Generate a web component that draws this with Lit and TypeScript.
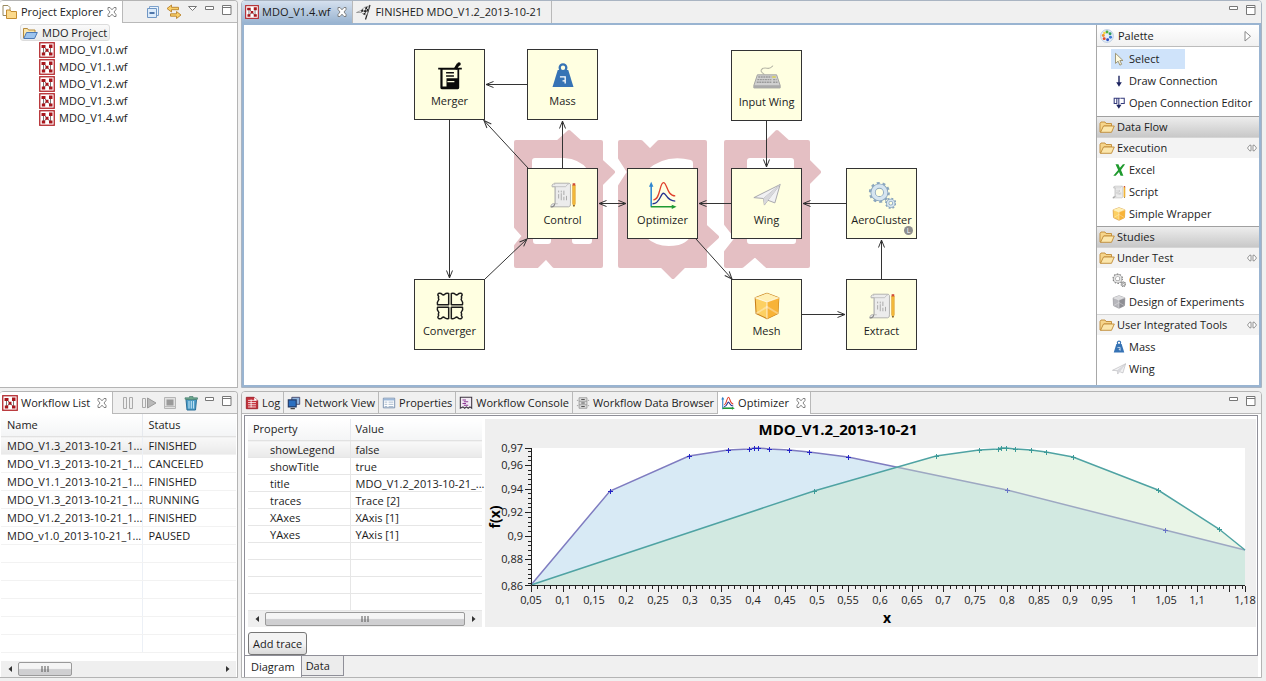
import { LitElement, html, svg, css, nothing } from "lit";
import { customElement, state } from "lit/decorators.js";
import { classMap } from "lit/directives/class-map.js";

/* ---------- icons ---------- */

const wf = svg`<rect x=".75" y=".75" width="14.5" height="14.5" fill="#fff" stroke="#b3262b" stroke-width="1.3"/>
  <path d="M4.5 4.5V12M4.5 12L8 8M8 8L11.500 12M11.500 12V4.500M4.500 4.500L8 8" fill="none" stroke="#555" stroke-width=".8"/>
  <path d="M2.500 3h4v3h-4zM10 2.500h3.500V6H10zM6.500 6.800h3v3h-3zM2.800 10.500h3.400v3H2.800zM10 10.500h3.500v3H10z" fill="#a8161c"/>`;
const folder = svg`<path d="M1 4.500L2 3h4l1 1.500h5.500V7H5L2.500 13H1z" fill="#f6d58b" stroke="#c08a35" stroke-width=".9"/>
  <path d="M1.500 13.300L4.500 7H15.300L12.500 13.300z" fill="#fbe6ac" stroke="#c08a35" stroke-width=".9"/>`;
const chart = svg`<path d="M2 15V2.500M14 14H2" fill="none" stroke="#2f7fc4" stroke-width="1.3"/><path d="M2 14h11" stroke="#1f9a32" stroke-width="1.500"/>
  <path d="M0.300 4L2 .800L3.700 4z" fill="#2f7fc4"/><path d="M12.500 12.300L15.700 14L12.500 15.700z" fill="#1f9a32"/>
  <path d="M3.500 10C6.500 10 6.500 1.500 8.500 1.500S10 9 14 9" fill="none" stroke="#e0402c" stroke-width="1.200"/>
  <path d="M3.500 12.200C7 12.200 7 7 8.500 7S10 11.500 14 11.500" fill="none" stroke="#26338f" stroke-width="1.200"/>`;
const plot = svg`<path d="M2.500 29V5" stroke="#2f86d0" stroke-width="1.800"/><path d="M0 6.500L2.500 .800L5 6.500z" fill="#2f86d0"/>
  <path d="M2 29.500H27" stroke="#1f9a32" stroke-width="1.600"/><path d="M26 27L31.500 29.500L26 32z" fill="#1f9a32"/>
  <path d="M5 21.500C13 21.500 12 1.800 16.500 1.800S20 17 30 17" fill="none" stroke="#e0402c" stroke-width="1.500"/>
  <path d="M4 26C13 26 13 14 16.500 14S20 23 30 23" fill="none" stroke="#26338f" stroke-width="1.500"/>`;
const scroll = svg`<path d="M7 3.500Q3 2.500 3.500 6.500H7V26Q2.500 25 2 29.500H22.500Q25 29 24.500 26V4Q24 2.500 22 2.500H6" fill="#ececec" stroke="#a9a9a9" stroke-width="1"/>
  <path d="M7 6.500V26H10" fill="none" stroke="#bbb"/><path d="M2 29.500Q6 30 6.500 26" fill="none" stroke="#888" stroke-width="1.500"/><path d="M3.500 6.500H19Q21 3 24 2.500" fill="none" stroke="#bdbdbd"/>
  <path d="M11 11v2M11 15v5M14 11v2M14 14v8M17 11v5M17 18v4M20 17v5" stroke="#a2a2a2" stroke-width="1"/>
  <path d="M27 4.500h3V26l-1.500 3.500L27 26z" fill="#f5bd3d" stroke="#d58a1a" stroke-width=".6"/><path d="M27 2.500h3v2.500h-3z" fill="#cf4a3a"/><path d="M27.700 27.500h1.600l-.8 2z" fill="#333"/>`;
const weight = svg`<circle cx="16" cy="6.500" r="3.800" fill="none" stroke="#3673b5" stroke-width="2.600"/><path d="M10 9H22L28 28.500H4z" fill="#3673b5"/>
  <path d="M12.500 17H18.500V24.500M15.500 21.500H18.500" fill="none" stroke="#fff" stroke-width="1.500"/>`;
const plane = svg`<path d="M1 19L31 4L25 25L17 22L13 27.500L12 20z" fill="#f1f1f3" stroke="#a5a5aa" stroke-width="1.100" stroke-linejoin="round"/>
  <path d="M12 20L31 4L17 22z" fill="#fff" stroke="#b5b5ba" stroke-width="1" stroke-linejoin="round"/><path d="M12 20L13 27.500L17 22L31 4z" fill="#d8d8dc"/>`;
const cube = (a: string, b: string, c: string, s: string) => svg`<path d="M16 1.500L29.500 6.500L28.500 24.500L16 30.500L3.500 24.500L2.500 6.500z" fill="${b}" stroke="${s}" stroke-width="1.200" stroke-linejoin="round"/>
  <path d="M16 1.500L29.500 6.500L16 11.500L2.500 6.500z" fill="${a}"/><path d="M16 11.500L29.500 6.500L28.500 24.500L16 30.500z" fill="${c}"/>
  <path d="M2.500 6.500L16 11.500L29.500 6.500M16 11.500V30.500" fill="none" stroke="#fff" stroke-opacity=".7" stroke-width="1.200"/>
  <path d="M3.500 24.500L16 17L28.500 24.500" fill="none" stroke="#fff" stroke-opacity=".35" stroke-width="2"/>`;
const gears = (c: string, f: string) => svg`<circle cx="13" cy="13" r="10.500" fill="none" stroke="${c}" stroke-width="3" stroke-dasharray="3.300 3.300"/>
  <circle cx="13" cy="13" r="7.200" fill="none" stroke="${c}" stroke-width="6"/><circle cx="13" cy="13" r="7.200" fill="none" stroke="${f}" stroke-width="4"/>
  <circle cx="26" cy="25.500" r="5.300" fill="none" stroke="${c}" stroke-width="2.400" stroke-dasharray="2.080 2.080"/><circle cx="26" cy="25.500" r="3.500" fill="none" stroke="${c}" stroke-width="3.600"/><circle cx="26" cy="25.500" r="3.500" fill="none" stroke="${f}" stroke-width="1.800"/>`;
const piece = "M3 5Q1 2.500 3.500 1.500Q5.500 1 7 2.700Q8.500 4 10 2.500Q11.500 1 14.500 1.700V14.500H1.700Q1 11.500 2.500 10Q4 8.500 2.700 7z";

const icons: Record<string, [number, unknown]> = {
  wf: [16, wf],
  folder: [16, folder],
  chart: [16, chart],
  plot: [32, plot],
  scroll: [32, scroll],
  weight: [32, weight],
  plane: [32, plane],
  box: [32, cube("#fff0b5", "#fdd062", "#f8b338", "#c87f1a")],
  greybox: [32, cube("#dcdcde", "#b6b6bb", "#8e8e94", "#85858a")],
  gears: [32, gears("#8ba6bd", "#d6e5f0")],
  greygears: [32, gears("#7b7b7b", "#e4e4e4")],
  files: [16, svg`<path d="M1 1.500h5l2 2v8H1z" fill="#fff" stroke="#9a8a60"/><path d="M4.500 6h3.500l1 1.500h5.500v7h-10z" fill="#fbd98b" stroke="#c48c30"/>`],
  project: [16, svg`<path d="M1.500 13V3.500h4l1 1.500H13v3" fill="#fbe6ac" stroke="#b58b3d"/><path d="M1.800 13.500L4.500 7.500H15.300L12.500 13.500z" fill="#9cc3ee" stroke="#4c78b4"/>`],
  close: [12, svg`<path d="M2 1.500h2L6 3.800L8 1.500h2V3.500L8 6L10 8.500v2H8L6 8.200L4 10.500H2V8.500L4 6L2 3.500z" fill="#fff" stroke="#777" stroke-width=".9"/>`],
  collapse: [16, svg`<path d="M4.500 4.500v-2h9v9h-2" fill="#eaf3fc" stroke="#7fa3cc"/><path d="M2.500 4.500h9v9h-9z" fill="#dcebfa" stroke="#6f96c4"/><path d="M4.500 9h5" stroke="#1f4f8f" stroke-width="1.500"/>`],
  link: [16, svg`<path d="M1 4.500L5.500 1V3.300H12.500V5.700H5.500V8z" fill="#f9cf67" stroke="#b9812a" stroke-width=".9"/><path d="M15 11L10.500 7.500V9.800H4.500V12.200H10.500V14.500z" fill="#f9cf67" stroke="#b9812a" stroke-width=".9"/>`],
  menu: [12, svg`<path d="M1.500 2.500h8L5.500 6.500z" fill="#fff" stroke="#777"/>`],
  min: [12, svg`<path d="M1.500 2.500h8v3h-8z" fill="#fff" stroke="#777"/>`],
  max: [12, svg`<path d="M1.500 1.500h8.500v9H1.500zM1.500 3.500h8.500" fill="#fff" stroke="#777"/>`],
  flag: [16, svg`<path d="M14 1L9.500 15.500" stroke="#222" stroke-width="1.200"/><path d="M.5 8.500L5 6.500L8 3.500L13 2L11 11L7.500 10.500L5.500 8.500z" fill="#eee" stroke="#777" stroke-width=".6"/><path d="M5 6.500l2-1.500l.5 2.200l-2 1zM9.500 3.200l2-.6l-.5 2.500l-2 .3zM7.500 7.200l1.800-1.800l1.200 1.800l-1 1.800zM11 5l1.300 0l-.6 2.500l-1.400-.2zM7.500 9l2 0l-.4 1.700l-1.600-.2z" fill="#222"/>`],
  pause: [16, svg`<path d="M3.500 2.500h3v11h-3zM9.500 2.500h3v11h-3z" fill="#eee" stroke="#aaa"/>`],
  resume: [16, svg`<path d="M1.500 3.500h3v9h-3z" fill="#eee" stroke="#aaa"/><path d="M6.500 3L15 8L6.500 13z" fill="#b9b9b9" stroke="#999"/>`],
  stop: [16, svg`<path d="M2.500 2.500h11v11h-11z" fill="#e2e2e2" stroke="#b5b5b5"/><path d="M4.500 4.500h7v6h-7z" fill="#9a9a9a"/><path d="M2.500 11.500h11" stroke="#bbb"/>`],
  trash: [16, svg`<path d="M3 4.500h10.500L12.500 15h-8.500z" fill="#4b9cc8" stroke="#2d6f97"/><path d="M6 6v7.500M8.300 6v7.500M10.600 6v7.500" stroke="#c9e6f5"/><path d="M2 4.200Q8 5.500 14.500 4.200V2.800H10V1.500H6.500V2.800H2z" fill="#6da88c" stroke="#4b7f74" stroke-width=".7"/>`],
  palette: [16, svg`<circle cx="8" cy="8" r="7.300" fill="#e6eef8" stroke="#b5c8e0"/><circle cx="8" cy="3.500" r="1.700" fill="#4caf3f"/><circle cx="11.500" cy="5.500" r="1.700" fill="#2f9c64"/><circle cx="12" cy="9.500" r="1.700" fill="#3c78d8"/><circle cx="8.700" cy="12.300" r="1.700" fill="#2c4fc0"/><circle cx="4.800" cy="11" r="1.700" fill="#e24a2c"/><circle cx="3.800" cy="7.300" r="1.700" fill="#f2902b"/><circle cx="5" cy="4.500" r="1.400" fill="#f7d33b"/>`],
  expand: [12, svg`<path d="M3 1.500L8.500 6.300L3 11z" fill="#fff" stroke="#888"/>`],
  pin: [12, svg`<path d="M5 3.200H3.700L1.500 6L3.700 8.800H5V3.200zM7 3.200H8.300L10.500 6L8.300 8.800H7z" fill="#fff" stroke="#888" stroke-width=".9"/>`],
  cursor: [16, svg`<path d="M4 1.500V13L7 10.500L9 15L11 14L9 9.700H12.500z" fill="#fffbe0" stroke="#8b7f5a" stroke-width=".9"/>`],
  arrow: [16, svg`<path d="M8 2V11" stroke="#1d2460" stroke-width="1.600"/><path d="M4.800 9.500h6.400L8 14.500z" fill="#1d2460"/>`],
  editor: [16, svg`<path d="M2.500 2.500h3v6h-3zM9.500 2.500h4.500v6h-4M6 2.500h3M7.800 3v8" fill="none" stroke="#343a7c" stroke-width="1.200"/><path d="M4.800 10h6L7.800 14.500z" fill="#1d2460"/>`],
  excel: [16, svg`<path d="M4 1.500h3.300L9 5.500L12.500 1.500H15L10.300 8L13 14.500H9.800L8 10.300L4.200 14.500H1.500L7 8z" fill="#1f9a2e"/>`],
  log: [16, svg`<path d="M1.500 1.500h9l4 3.500v9.500h-13z" fill="#c4303a" stroke="#9a1c26"/><path d="M3.500 5h9M3.500 7.500h9M3.500 10h9M3.500 12.500h9M7 4v9" stroke="#fff" stroke-width=".9"/><path d="M10.500 1.500v3.500h4" fill="#fff"/>`],
  network: [16, svg`<path d="M5.500 1.500h9v8h-9z" fill="#8fb4de" stroke="#446"/><path d="M1.500 4.500h9v8h-9z" fill="#2a6fc0" stroke="#223a66" stroke-width="1.300"/><path d="M4 14.500h5" stroke="#444" stroke-width="1.500"/>`],
  properties: [16, svg`<path d="M1.500 2.500h13v11h-13z" fill="#fff" stroke="#6d87a8"/><path d="M2 3h12v2H2z" fill="#9db9da"/><path d="M3 7h3M3 9.500h3M3 12h3M7.500 7H13M7.500 9.500H13M7.500 12H13" stroke="#9fb2c8"/>`],
  console: [16, svg`<path d="M1.500 1.500h13v12.500l-2-1.500l-2 1.500l-2-1.500l-2 1.500l-2-1.500l-3 1.500z" fill="#f2eaf4" stroke="#3c3440" stroke-width="1.200"/><path d="M4 4.500h4M5.500 6.500h5M4 8.500h4M5.500 10.500h5" stroke="#8e3a96" stroke-width="1.200"/>`],
  database: [16, svg`<path d="M3.500 2h9v12h-9z" fill="#dcdcdc" stroke="#9a9a9a"/><path d="M3.500 6h9M3.500 10h9" stroke="#9a9a9a"/><path d="M6 4h4M6 8h4M6 12h4" stroke="#555" stroke-width="1.400"/><path d="M1 5h1.500M13.500 5h1.500M1 11h1.500M13.500 11h1.500" stroke="#999"/>`],
  beaker: [32, svg`<path d="M2.500 6.500h27v2h-3V29.500q0 1.500-1.500 1.500h-18.500q-1.500 0-1.500-1.500V8.500h-2.500z" fill="#0a0a0a"/><path d="M7.500 8.800h17V18.500H12v9.500H7.500z" fill="#ffffe1"/><path d="M11.500 12.300h9M11.500 16h9" stroke="#111" stroke-width="1.700"/><path d="M13 22.500h8" stroke="#ffffe1" stroke-width="1.500"/><path d="M22 8L25.500 2.500" stroke="#0a0a0a" stroke-width="3.500"/><circle cx="26.300" cy="2.300" r="2" fill="#0a0a0a"/>`],
  converge: [32, svg`<g fill="none" stroke="#1c1c1c" stroke-width="1.700" stroke-linejoin="round"><path d="${piece}"/><path d="${piece}" transform="matrix(-1 0 0 1 32 0)"/><path d="${piece}" transform="matrix(1 0 0 -1 0 32)"/><path d="${piece}" transform="matrix(-1 0 0 -1 32 32)"/></g>`],
  keyboard: [32, svg`<path d="M13 13C6 9 10 5 16 6S21 3 23 3.500" fill="none" stroke="#b5b5a5" stroke-width="1.200"/><path d="M5 13.500H27L31 25.500V28.500H1V25.500z" fill="#d0d0d0" stroke="#9b9b9b"/><path d="M1 25.500H31V28.500H1z" fill="#aaa"/><path d="M6 16h15M5 19h16M4.300 22h17M23 19h4M23 22h5" stroke="#9a9a9a" stroke-width="1.600" stroke-dasharray="2.200 .7"/><path d="M22 16h4" stroke="#d8cf4a" stroke-width="1.600"/>`],
  left: [8, svg`<path d="M6 1V7L2.500 4z" fill="#333"/>`],
  right: [8, svg`<path d="M2 1V7L5.500 4z" fill="#333"/>`],
  grip: [8, svg`<path d="M1 1v6M4 1v6M7 1v6" stroke="#555"/>`],
};

const icon = (name: string, size = 16) => {
  const [box, shape] = icons[name];
  return html`<svg class="icon" width=${size} height=${size} viewBox="0 0 ${box} ${box}" aria-hidden="true">${shape}</svg>`;
};

/* ---------- shared styles ---------- */

const base = css`
  * { box-sizing: border-box; }
  button, input { font: inherit; color: inherit; margin: 0; padding: 0; border: 0; background: none; text-align: left; }
  .icon { display: block; flex: none; }
`;

/* ---------- workflow canvas ---------- */

interface WorkflowNode { label: string; icon: string; x: number; y: number; badge?: string; }

const nodes: WorkflowNode[] = [
  { label: "Merger", icon: "beaker", x: 170, y: 24 },
  { label: "Mass", icon: "weight", x: 283, y: 24 },
  { label: "Input Wing", icon: "keyboard", x: 487, y: 25 },
  { label: "Control", icon: "scroll", x: 283, y: 143 },
  { label: "Optimizer", icon: "plot", x: 383, y: 143 },
  { label: "Wing", icon: "plane", x: 487, y: 143 },
  { label: "AeroCluster", icon: "gears", x: 602, y: 143, badge: "L" },
  { label: "Converger", icon: "converge", x: 170, y: 254 },
  { label: "Mesh", icon: "box", x: 487, y: 254 },
  { label: "Extract", icon: "scroll", x: 602, y: 254 },
];

const edges = [
  "M283 59.500H242", "M284 143L240 95.500", "M318.500 143V96", "M205.500 95V253",
  "M241 254L283 214", "M487 178.500H455", "M452 214L488 254", "M522.500 96V142",
  "M602 178.500H559", "M558 289.500H601", "M637.500 254V215",
];

@customElement("workflow-canvas")
export class WorkflowCanvas extends LitElement {
  static styles = [base, css`
    :host { display: block; position: relative; flex: 1; min-width: 0; min-height: 340px; overflow: hidden; background: #fff; }
    .edges { position: absolute; left: 0; top: 0; width: 852px; height: 359px; }
    .mark { fill: #e4bfc3; stroke: #e4bfc3; stroke-width: 4; stroke-linejoin: round; }
    .hole { fill: #fff; stroke: #fff; stroke-width: 6; stroke-linejoin: round; }
    .edge { fill: none; stroke: #333; stroke-width: 1; }
    .node { position: absolute; width: 71px; height: 71px; border: 1px solid #333; background: #ffffe1; display: flex; flex-direction: column; align-items: center; gap: 3px; padding-top: 12px; white-space: nowrap; line-height: 16px; }
    .badge { position: absolute; right: 3px; bottom: 3px; width: 9px; height: 9px; border-radius: 50%; background: #8d8d8d; color: #fff; font-size: 7px; line-height: 9px; text-align: center; }
  `];

  render() {
    return html`
      <svg class="edges" viewBox="0 0 852 359" aria-hidden="true">
        <defs>
          <marker id="tip" viewBox="0 0 10 8" refX="9" refY="4" markerWidth="10" markerHeight="8" markerUnits="userSpaceOnUse" orient="auto-start-reverse">
            <path d="M1.500 1L9 4L1.500 7" fill="none" stroke="#333"/>
          </marker>
        </defs>
        <g class="mark">
          <path d="M272 117H314L325 107L336 117H357V136L369 147L357 159V241H310L302 232L293 241H272V221L280 211L272 202z"/>
          <path d="M376 117H397L406 126L415 117H461V201L473 212L461 223V241H440L429 252L418 241H376V161L385 147L376 133z"/>
          <path d="M482 117H523L533 107L544 117H564V136L575 147L564 158V241H523L511 230L498 241H482V227L493 213L482 199z"/>
        </g>
        <g class="hole">
          <path d="M291 136H320Q334 137 341 146V160H291zM292 200H304V216H292zM331 200H345V216H331z"/>
          <path d="M404 148Q422 132 446 138V200Q446 214 434 217Q416 221 404 210z"/>
          <path d="M506 136H547V150L549 216H506z"/>
        </g>
        ${edges.map((d) => svg`<path class="edge" d=${d} marker-end="url(#tip)"/>`)}
        <path class="edge" d="M355 178.500H382" marker-start="url(#tip)" marker-end="url(#tip)"/>
      </svg>
      ${nodes.map((n) => html`
        <div class="node" style="left:${n.x}px;top:${n.y}px">
          ${icon(n.icon, 28)}<span>${n.label}</span>${n.badge ? html`<span class="badge">${n.badge}</span>` : nothing}
        </div>`)}
    `;
  }
}

/* ---------- trace chart ---------- */

type Point = [number, number];
const first: Point[] = [[46, 166], [125, 72], [204, 37], [243, 31], [264, 30], [269, 29], [273, 29], [284, 30], [304, 31], [324, 33], [363, 38], [522, 71], [680, 111], [760, 131]];
const second: Point[] = [[46, 166], [329, 72], [451, 37], [494, 31], [513, 30], [516, 29], [521, 29], [530, 30], [546, 31], [561, 33], [588, 38], [673, 71], [734, 110], [760, 131]];
const px = (v: number) => Math.min(760, Math.round(46 + (v - 5) * 6.345)) + 0.5;
const comma = (v: number) => String(v / 100).replace(".", ",");

@customElement("trace-chart")
export class TraceChart extends LitElement {
  static styles = [base, css`
    :host { display: block; flex: 1; min-width: 0; background: #efefef; }
    .plot { display: block; width: 100%; height: auto; }
    .title, .axis { font-weight: 700; fill: #000; text-anchor: middle; }
    .title { font-size: 15px; }
    .axis { font-size: 14px; }
    .xlabel { font-size: 11px; fill: #222; text-anchor: middle; }
    .ylabel { font-size: 11px; fill: #222; text-anchor: end; }
    .tick { fill: none; stroke: #222; }
    .first { fill: none; stroke: #7f7cc0; stroke-width: 1.5; }
    .second { fill: none; stroke: #4fa3a3; stroke-width: 1.5; }
    .dots { fill: none; stroke: #2424c8; }
    .dots2 { fill: none; stroke: #3c9a98; }
  `];

  render() {
    const line = (p: Point[]) => "M" + p.map((q) => q.join(" ")).join("L");
    const plus = (p: Point[]) => p.slice(1, -1).map(([x, y]) => `M${x - 2} ${y + 0.5}h5M${x + 0.5} ${y - 2}v5`).join("");
    const xs = Array.from({ length: 114 }, (_, i) => i + 5);
    const xTicks = xs.map((v) => `M${px(v)} 167v${v % 5 === 0 || v === 118 ? 6 : 3}`).join("");
    const yTicks = Array.from({ length: 29 }, (_, i) => {
      const y = Math.round(164 - i * 4.72) + 0.5;
      return `M46 ${y}h${i % 5 === 0 && i > 0 ? -6 : -3}`;
    }).join("");
    const yLabels: [string, number][] = [["0,97", 33], ["0,96", 50], ["0,94", 74], ["0,92", 97], ["0,9", 121], ["0,88", 144], ["0,86", 171]];
    return html`
      <svg class="plot" viewBox="0 0 771 208" role="img" aria-label="MDO_V1.2_2013-10-21">
        <path d="M46 29H760V167H46z" fill="#fff"/>
        <path d="${line(first)}V166H46z" fill="#d8eaf5"/>
        <path class="first" d=${line(first)} />
        <path class="dots" d=${plus(first)} />
        <path d="${line(second)}V166H46z" fill="rgb(202 230 197)" fill-opacity=".41"/>
        <path class="second" d=${line(second)} />
        <path class="dots2" d=${plus(second)} />
        <path class="tick" d="M46.500 29V166.500H760M46 29.500h-6M46 166.500h-6${xTicks}${yTicks}"/>
        ${xs.filter((v) => (v % 5 === 0 && v < 115) || v === 118).map((v) => svg`<text class="xlabel" x=${px(v) - 0.5} y="185">${comma(v)}</text>`)}
        ${yLabels.map(([t, y]) => svg`<text class="ylabel" x="38" y=${y}>${t}</text>`)}
        <text class="title" x="353" y="16">MDO_V1.2_2013-10-21</text>
        <text class="axis" x="402" y="204">x</text>
        <text class="axis" transform="translate(15 98) rotate(-90)">f(x)</text>
      </svg>`;
  }
}

/* ---------- application shell ---------- */

const files = ["MDO_V1.0.wf", "MDO_V1.1.wf", "MDO_V1.2.wf", "MDO_V1.3.wf", "MDO_V1.4.wf"];
const runs = [
  ["MDO_V1.3_2013-10-21_1...", "FINISHED"],
  ["MDO_V1.3_2013-10-21_1...", "CANCELED"],
  ["MDO_V1.1_2013-10-21_1...", "FINISHED"],
  ["MDO_V1.3_2013-10-21_1...", "RUNNING"],
  ["MDO_V1.2_2013-10-21_1...", "FINISHED"],
  ["MDO_v1.0_2013-10-21_1...", "PAUSED"],
];
const properties = [
  ["showLegend", "false"], ["showTitle", "true"], ["title", "MDO_V1.2_2013-10-21_..."],
  ["traces", "Trace [2]"], ["XAxes", "XAxis [1]"], ["YAxes", "YAxis [1]"],
];
const views: [string, string][] = [
  ["log", "Log"], ["network", "Network View"], ["properties", "Properties"],
  ["console", "Workflow Console"], ["database", "Workflow Data Browser"], ["chart", "Optimizer"],
];
interface Drawer { title: string; closed?: boolean; items: [string, string][]; }
const drawers: Drawer[] = [
  { title: "Data Flow", closed: true, items: [] },
  { title: "Execution", items: [["excel", "Excel"], ["scroll", "Script"], ["box", "Simple Wrapper"]] },
  { title: "Studies", closed: true, items: [] },
  { title: "Under Test", items: [["greygears", "Cluster"], ["greybox", "Design of Experiments"]] },
  { title: "User Integrated Tools", items: [["weight", "Mass"], ["plane", "Wing"]] },
];

@customElement("app-root")
export class AppRoot extends LitElement {
  @state() private tool = "Select";
  @state() private run = 0;
  @state() private property = 0;

  static styles = [base, css`
    :host {
      display: grid; grid-template-columns: 238px minmax(0, 1fr); grid-template-rows: 387fr 287fr; gap: 3px;
      box-sizing: border-box; min-height: 100vh; padding: 0 4px 4px 0; background: #f0f0f0; color: #1c1c1c;
      font: 11px/16px "Open Sans", "Noto Sans", sans-serif;
    }
    .panel { display: flex; flex-direction: column; min-width: 0; border: 1px solid #b4b4b4; border-radius: 4px 4px 0 0; background: #fff; overflow: hidden; }
    .side { border-left: 0; }
    .bar { display: flex; height: 22px; flex: none; background: #f0f0f0; border-bottom: 1px solid #b9b9b9; }
    .tab { display: flex; align-items: center; gap: 3px; padding: 0 3px; height: 22px; border-right: 1px solid #b9b9b9; white-space: nowrap; }
    .tab.on { background: #fff; }
    .tab .push { padding-left: 3px; }
    .side .tab { padding: 0 4px 0 2px; }
    .tools { display: flex; margin-left: auto; align-items: flex-start; gap: 5px; padding: 3px 4px 0 0; }
    .editor { border-color: #a9b4c2; }
    .editor .bar { border-bottom: 0; }
    .editor .tab { padding-right: 9px; }
    .editor .tab.on { padding-right: 4px; background: linear-gradient(#d5e0ee, #99b4d1); }
    .stage { display: flex; flex: 1; border: 2px solid #99b4d1; }
    .tree { margin: 0; padding: 1px 0 0 20px; list-style: none; }
    .leaves { margin: 0; padding: 0 0 0 19px; list-style: none; }
    .item { display: flex; align-items: center; gap: 4px; height: 17px; }
    .root { width: fit-content; padding: 0 2px 0 1px; border: 1px solid #dcdcdc; border-radius: 3px; background: linear-gradient(#fafafa, #ebebeb); }

    .palette { display: flex; flex-direction: column; flex: none; width: 163px; border-left: 1px solid #a8a8a8; background: #fff; white-space: nowrap; }
    .phead { display: flex; align-items: center; gap: 4px; height: 22px; padding: 0 5px 0 3px; border-bottom: 1px solid #bcbcbc; background: linear-gradient(#fff, #f1f1f1); }
    .push { margin-left: auto; }
    .group { display: flex; flex-direction: column; padding: 1px 0 1px 14px; }
    .phead + .group { padding-bottom: 2px; }
    .tool { display: flex; align-items: center; gap: 2px; height: 22px; }
    .tool .icon { margin: 0 1px; }
    .tool.on { width: 74px; height: 20px; margin: 1px 0; background: #cfe3fa; }
    .drawer { display: flex; align-items: center; gap: 2px; height: 21px; padding: 0 1px 0 2px; border-top: 1px solid #d5d5d5; background: #f3f3f3; }
    .drawer.closed { border-top-color: #a0a0a0; background: linear-gradient(#ededed, #c8c8c8); }

    .grid { width: 100%; border-collapse: collapse; table-layout: fixed; white-space: nowrap; }
    .grid th { height: 23px; padding: 0 6px; text-align: left; font-weight: 400; background: linear-gradient(#fff, #f4f5f6); border-bottom: 1px solid #e2e2e2; border-right: 1px solid #e6e9ee; }
    .grid td { height: 18px; padding: 0 0 0 6px; border-right: 1px solid #ecf0f6; border-bottom: 1px solid #f2f2f2; line-height: 16px; }
    .grid .on td { background: linear-gradient(#f9f9f9, #e9e9e9); }
    .grid th:last-child, .grid td:last-child { border-right: 0; }
    .c1 { width: 141px; }
    .c2 { width: 102px; }
    .props .grid th { height: 22px; padding: 0 5px; }
    .props .grid td { height: 17px; line-height: 15px; padding: 0 0 0 5px; border-color: #e6e6e6; }
    .props .grid td:first-child { padding-left: 22px; }

    .scroll { display: flex; align-items: center; height: 16px; margin-top: auto; background: #efefef; }
    .step { display: flex; justify-content: center; width: 17px; }
    .track { display: flex; flex: 1; }
    .thumb { display: flex; align-items: center; justify-content: center; width: 54px; height: 14px; border: 1px solid #9a9a9a; border-radius: 2px; background: linear-gradient(#f5f5f5 45%, #cfcfd1 55%); }
    .wide { width: 100%; }
    .list { display: flex; flex-direction: column; flex: 1; padding: 0 1px; }

    .body { display: flex; flex-direction: column; flex: 1; margin: 1px 3px 0 2px; border: 1px solid #8f8f98; padding: 3px 1px 0 3px; }
    .split { display: flex; gap: 3px; }
    .props { display: flex; flex-direction: column; flex: none; width: 234px; }
    .add { align-self: flex-start; height: 23px; margin-top: 5px; padding: 0 4px; border: 1px solid #777; border-radius: 3px; background: linear-gradient(#f3f3f3 50%, #d9d9d9); }
    .foot { display: flex; align-items: flex-start; height: 21px; margin: 0 3px 0 2px; background: #f0f0f0; }
    .sheet { height: 21px; padding: 0 6px; border: 1px solid #8f8f98; border-width: 0 1px 0 1px; background: #fff; }
    .other { height: 20px; padding: 0 13px 0 4px; border-width: 0 1px 1px 0; background: #ececec; }
  `];

  private windowButtons() {
    return html`<button aria-label="Minimize">${icon("min", 12)}</button><button aria-label="Maximize">${icon("max", 12)}</button>`;
  }

  private scrollbar(wide = false) {
    return html`<div class="scroll"><button class="step" aria-label="Scroll left">${icon("left", 8)}</button>
      <div class="track"><div class="thumb ${classMap({ wide })}">${icon("grip", 8)}</div></div>
      <button class="step" aria-label="Scroll right">${icon("right", 8)}</button></div>`;
  }

  private toolItem([glyph, label]: [string, string]) {
    return html`<button class="tool ${classMap({ on: this.tool === label })}" @click=${() => (this.tool = label)}>${icon(glyph, 14)}${label}</button>`;
  }

  render() {
    return html`
      <section class="panel side">
        <div class="bar">
          <button class="tab on">${icon("files")}Project Explorer ${icon("close", 12)}</button>
          <div class="tools">
            <button aria-label="Collapse all">${icon("collapse")}</button><button aria-label="Link with editor">${icon("link")}</button>
            <button aria-label="View menu">${icon("menu", 12)}</button>${this.windowButtons()}
          </div>
        </div>
        <ul class="tree">
          <li><span class="item root">${icon("project")}MDO Project</span>
            <ul class="leaves">${files.map((f) => html`<li class="item">${icon("wf")}${f}</li>`)}</ul>
          </li>
        </ul>
      </section>

      <section class="panel editor">
        <div class="bar">
          <button class="tab on">${icon("wf", 14)}MDO_V1.4.wf <span class="push">${icon("close", 12)}</span></button>
          <button class="tab">${icon("flag")}FINISHED MDO_V1.2_2013-10-21</button>
          <div class="tools">${this.windowButtons()}</div>
        </div>
        <div class="stage">
          <workflow-canvas></workflow-canvas>
          <aside class="palette">
            <div class="phead">${icon("palette", 14)}Palette<span class="push">${icon("expand", 12)}</span></div>
            <div class="group">
              ${([["cursor", "Select"], ["arrow", "Draw Connection"], ["editor", "Open Connection Editor"]] as [string, string][]).map((t) => this.toolItem(t))}
            </div>
            ${drawers.map((d) => html`
              <button class="drawer ${classMap({ closed: !!d.closed })}">${icon("folder")}${d.title}${d.closed ? nothing : html`<span class="push">${icon("pin", 12)}</span>`}</button>
              ${d.items.length ? html`<div class="group">${d.items.map((t) => this.toolItem(t))}</div>` : nothing}`)}
          </aside>
        </div>
      </section>

      <section class="panel side">
        <div class="bar">
          <button class="tab on">${icon("wf")}Workflow List <span class="push">${icon("close", 12)}</span></button>
          <div class="tools">
            <button aria-label="Pause">${icon("pause")}</button><button aria-label="Resume">${icon("resume")}</button>
            <button aria-label="Cancel">${icon("stop")}</button><button aria-label="Delete">${icon("trash")}</button>${this.windowButtons()}
          </div>
        </div>
        <div class="list">
          <table class="grid">
            <thead><tr><th class="c1">Name</th><th>Status</th></tr></thead>
            <tbody>
              ${runs.map((r, i) => html`<tr class=${classMap({ on: this.run === i })} @click=${() => (this.run = i)}>${r.map((c) => html`<td>${c}</td>`)}</tr>`)}
              ${[0, 1, 2, 3, 4, 5].map(() => html`<tr><td></td><td></td></tr>`)}
            </tbody>
          </table>
          ${this.scrollbar()}
        </div>
      </section>

      <section class="panel">
        <div class="bar">
          ${views.map(([g, l]) => html`<button class="tab ${classMap({ on: l === "Optimizer" })}">${icon(g, 14)}${l}${l === "Optimizer" ? html`<span class="push">${icon("close", 12)}</span>` : nothing}</button>`)}
          <div class="tools">${this.windowButtons()}</div>
        </div>
        <div class="body">
          <div class="split">
            <div class="props">
              <table class="grid">
                <thead><tr><th class="c2">Property</th><th>Value</th></tr></thead>
                <tbody>
                  ${properties.map((r, i) => html`<tr class=${classMap({ on: this.property === i })} @click=${() => (this.property = i)}>${r.map((c) => html`<td>${c}</td>`)}</tr>`)}
                  ${[0, 1, 2, 3].map(() => html`<tr><td></td><td></td></tr>`)}
                </tbody>
              </table>
              ${this.scrollbar(true)}
            </div>
            <trace-chart></trace-chart>
          </div>
          <button class="add">Add trace</button>
        </div>
        <div class="foot"><button class="sheet">Diagram</button><button class="sheet other">Data</button></div>
      </section>
    `;
  }
}
